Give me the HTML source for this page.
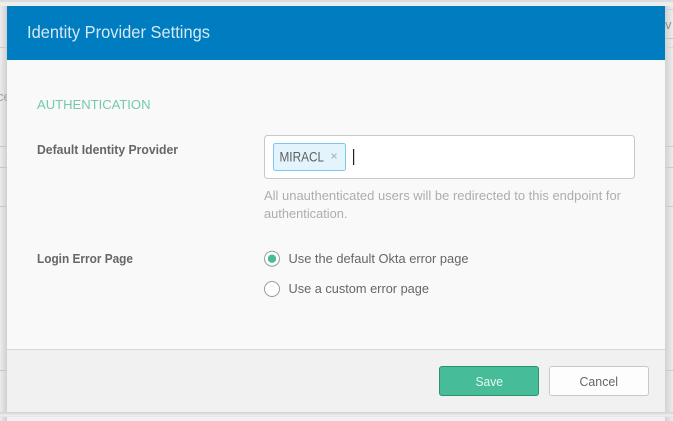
<!DOCTYPE html>
<html><head><meta charset="utf-8"><style>
html,body{margin:0;padding:0;background:#f1f1f1;width:673px;height:421px;overflow:hidden}
svg{position:absolute;left:0;top:0}
text{font-family:"Liberation Sans",sans-serif}
</style></head><body>
<svg width="673" height="421" viewBox="0 0 673 421" xmlns="http://www.w3.org/2000/svg">
<defs>
<linearGradient id="sl" x1="0" x2="1" y1="0" y2="0"><stop offset="0" stop-color="#ececec"/><stop offset="1" stop-color="#d0d0d0"/></linearGradient>
<linearGradient id="sr" x1="0" x2="1" y1="0" y2="0"><stop offset="0" stop-color="#d2d2d2"/><stop offset="1" stop-color="#ececec"/></linearGradient>
<linearGradient id="sb" x1="0" x2="0" y1="0" y2="1"><stop offset="0" stop-color="#d2d2d2"/><stop offset="1" stop-color="#f1f1f1"/></linearGradient>
</defs>
<rect x="0" y="0" width="673" height="421" fill="#f1f1f1"/>
<rect x="0" y="0" width="673" height="2" fill="#dcdcdc"/>
<rect x="0" y="2" width="673" height="4" fill="#ededed"/>
<rect x="0" y="6" width="7" height="415" fill="url(#sl)"/>
<rect x="665" y="6" width="8" height="415" fill="url(#sr)"/>
<rect x="665" y="9" width="8" height="1" fill="#cfcfcf"/>
<rect x="665" y="38" width="8" height="1" fill="#c4c4c4"/>
<rect x="665" y="47" width="8" height="1" fill="#d6d6d6"/>
<rect x="0" y="47" width="7" height="1" fill="#c9c9c9"/>
<rect x="0" y="146" width="7" height="1" fill="#c6c6c6"/>
<rect x="665" y="146" width="8" height="1" fill="#cacaca"/>
<rect x="0" y="167" width="7" height="1" fill="#c6c6c6"/>
<rect x="665" y="167" width="8" height="1" fill="#cacaca"/>
<rect x="0" y="206" width="7" height="1" fill="#c6c6c6"/>
<rect x="665" y="206" width="8" height="1" fill="#cacaca"/>
<rect x="0" y="370" width="7" height="1" fill="#c6c6c6"/>
<rect x="665" y="370" width="8" height="1" fill="#cacaca"/>
<rect x="0" y="412" width="673" height="4" fill="url(#sb)"/>
<rect x="0" y="416" width="673" height="1" fill="#e6e6e6"/>
<text x="-3" y="101" font-size="13" fill="#a0a0a0">ce</text>
<text x="665" y="29" font-size="13" fill="#8c8c8c">v</text>

<rect x="7" y="6" width="658" height="406" fill="#f9f9f9"/>
<rect x="7" y="6" width="658" height="54" fill="#007cc0"/>
<rect x="7" y="349" width="658" height="63" fill="#f1f1f1"/>
<rect x="7" y="349" width="658" height="1" fill="#d8d8d8"/>

<text x="27" y="38" font-size="17.5" fill="#d5e9f5" textLength="183" lengthAdjust="spacingAndGlyphs">Identity Provider Settings</text>
<text x="37" y="109" font-size="13" fill="#74c9ac" textLength="113.5" lengthAdjust="spacingAndGlyphs">AUTHENTICATION</text>
<text x="37" y="154" font-size="13" font-weight="700" fill="#666666" textLength="141" lengthAdjust="spacingAndGlyphs">Default Identity Provider</text>

<rect x="264.5" y="135.5" width="370" height="43" rx="3" fill="#fff" stroke="#c8c8c8"/>
<rect x="273.5" y="143.5" width="72" height="27" rx="2" fill="#e4f4fd" stroke="#7cc6ef"/>
<text x="279.5" y="161.5" font-size="13.5" fill="#5e5e5e" textLength="44.5" lengthAdjust="spacingAndGlyphs">MIRACL</text>
<path d="M331.5 153.5l5 5M336.5 153.5l-5 5" stroke="#a9b4ba" stroke-width="1.1" fill="none"/>
<rect x="353" y="149" width="1.2" height="16" fill="#222"/>

<text x="264" y="200" font-size="13" fill="#adadad" textLength="357" lengthAdjust="spacingAndGlyphs">All unauthenticated users will be redirected to this endpoint for</text>
<text x="264" y="218" font-size="13" fill="#adadad" textLength="83.5" lengthAdjust="spacingAndGlyphs">authentication.</text>

<text x="37" y="263" font-size="13" font-weight="700" fill="#666666" textLength="96" lengthAdjust="spacingAndGlyphs">Login Error Page</text>

<circle cx="272" cy="258.7" r="7.5" fill="#fff" stroke="#9a9a9a" stroke-width="1"/>
<circle cx="272" cy="258.7" r="4.2" fill="#46bd98"/>
<text x="288.5" y="263" font-size="13" fill="#666666" textLength="180" lengthAdjust="spacingAndGlyphs">Use the default Okta error page</text>
<circle cx="272" cy="289" r="7.5" fill="#fff" stroke="#9a9a9a" stroke-width="1"/>
<text x="288.5" y="293" font-size="13" fill="#666666" textLength="140.5" lengthAdjust="spacingAndGlyphs">Use a custom error page</text>

<rect x="439.5" y="366.5" width="99" height="29" rx="2.5" fill="#46bd98" stroke="#2f8f72"/>
<text x="475.5" y="386" font-size="13" fill="#e8f7f2" textLength="27.5" lengthAdjust="spacingAndGlyphs">Save</text>
<rect x="549.5" y="366.5" width="99" height="29" rx="2.5" fill="#fdfdfd" stroke="#c8c8c8"/>
<text x="579.5" y="386" font-size="13" fill="#666666" textLength="38.5" lengthAdjust="spacingAndGlyphs">Cancel</text>
</svg>
</body></html>
